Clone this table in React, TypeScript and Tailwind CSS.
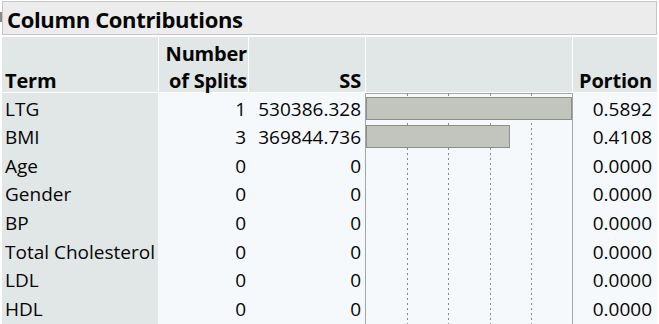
import React from "react";

const rows: [string, string, string, string, number][] = [
  ["LTG", "1", "530386.328", "0.5892", 0.5892],
  ["BMI", "3", "369844.736", "0.4108", 0.4108],
  ["Age", "0", "0", "0.0000", 0],
  ["Gender", "0", "0", "0.0000", 0],
  ["BP", "0", "0", "0.0000", 0],
  ["Total Cholesterol", "0", "0", "0.0000", 0],
  ["LDL", "0", "0", "0.0000", 0],
  ["HDL", "0", "0", "0.0000", 0],
];

const RH = 28.57;
const CW = 206;

function BarChart() {
  const max = 0.5892;
  const h = 240;
  const ticks = [1, 2, 3, 4].map((i) => (CW * i) / 5);
  return (
    <svg width={CW} height={h} className="block">
      <line x1={0} y1={0.5} x2={CW} y2={0.5} stroke="#a4a6a2" strokeWidth={1} />
      {ticks.map((t) => (
        <line
          key={t}
          x1={Math.round(t) + 0.5}
          y1={0}
          x2={Math.round(t) + 0.5}
          y2={h}
          stroke="#8a8a8a"
          strokeWidth={1}
          strokeDasharray="2 3"
        />
      ))}
      {ticks.map((t) => (
        <line
          key={"k" + t}
          x1={Math.round(t) + 0.5}
          y1={0}
          x2={Math.round(t) + 0.5}
          y2={3}
          stroke="#8a8a8a"
          strokeWidth={1}
        />
      ))}
      {rows.map((r, i) =>
        r[4] > 0 ? (
          <rect
            key={r[0]}
            x={0.5}
            y={Math.round(i * RH + 3.5) + 0.5}
            width={Math.round((r[4] / max) * CW) - 1}
            height={22}
            fill="#c1c5bd"
            stroke="#8d8f88"
            strokeWidth={1}
          />
        ) : null
      )}
    </svg>
  );
}

export default function App() {
  return (
    <div className="relative w-[659px] h-[324px] overflow-hidden bg-white font-['Open_Sans',sans-serif] text-[#050505]">
      <div className="absolute left-0 top-[12px] w-[2px] h-[10px] bg-[#8a8a8a]" />
      <div className="pl-[2px] pt-px">
        <div className="h-[34px] w-[655px] border border-[#c6c6c6] bg-[#ececec] flex items-center pl-[4px] pt-px text-[22px] font-bold leading-none tracking-[-0.35px]">
          Column Contributions
        </div>
        <div className="mt-[2px] flex gap-px text-[20px] font-bold leading-[22px] tracking-[-0.2px]">
          <div className="w-[156px] h-[55px] bg-[#e1e6e6] flex items-end pl-[3px]">
            <span>Term</span>
          </div>
          <div className="w-[89px] h-[55px] bg-[#e1e6e6] flex flex-col items-end justify-end pr-[1px]">
            <span className="mb-[5px]">Number</span>
            <span>of Splits</span>
          </div>
          <div className="w-[116px] h-[55px] bg-[#e1e6e6] flex items-end justify-end pr-[4px]">
            <span>SS</span>
          </div>
          <div className="w-[206px] h-[55px] bg-[#e1e6e6]" />
          <div className="w-[84px] h-[55px] bg-[#e1e6e6] flex items-end justify-end pr-[5px]">
            <span>Portion</span>
          </div>
        </div>
        <div className="mt-px flex w-[655px] h-[240px] bg-[#f5f9fc] text-[19px] leading-none">
          <div className="w-[156px] bg-[#e1e6e6] flex flex-col">
            {rows.map((r) => (
              <div key={r[0]} className="h-[28.57px] shrink-0 flex items-center pl-[3px] pt-[4px] whitespace-nowrap">
                {r[0]}
              </div>
            ))}
          </div>
          <div className="w-[90px] flex flex-col">
            {rows.map((r) => (
              <div key={r[0]} className="h-[28.57px] shrink-0 flex items-center justify-end pr-[2px] pt-[4px]">
                {r[1]}
              </div>
            ))}
          </div>
          <div className="w-[117px] flex flex-col">
            {rows.map((r) => (
              <div key={r[0]} className="h-[28.57px] shrink-0 flex items-center justify-end pr-[4px] pt-[4px]">
                {r[2]}
              </div>
            ))}
          </div>
          <div className="w-[208px] border-x border-[#a4a6a2]">
            <BarChart />
          </div>
          <div className="w-[84px] flex flex-col">
            {rows.map((r) => (
              <div key={r[0]} className="h-[28.57px] shrink-0 flex items-center justify-end pr-[5px] pt-[4px]">
                {r[3]}
              </div>
            ))}
          </div>
        </div>
      </div>
    </div>
  );
}
